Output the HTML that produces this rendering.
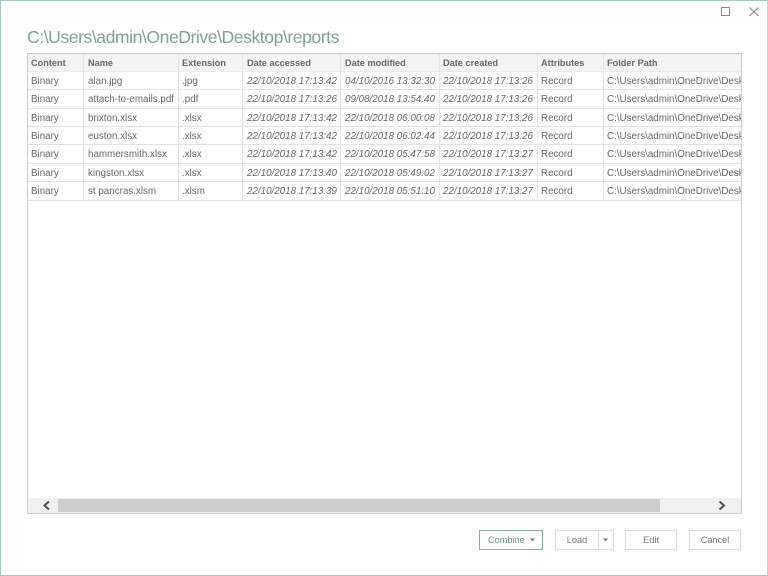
<!DOCTYPE html>
<html><head><meta charset="utf-8">
<style>
html,body{margin:0;padding:0;background:#fff}
#w{position:relative;width:768px;height:576px;overflow:hidden;background:#fff;font-family:"Liberation Sans",sans-serif;color:#666;font-size:9.8px;box-sizing:border-box}
.a{position:absolute}
#t{left:27px;top:26px;font-size:17.6px;letter-spacing:-0.45px;color:#7fa297;white-space:nowrap;line-height:22px;filter:blur(.25px)}
#g{left:27px;top:53px;width:713px;height:459px;border:1px solid #a8e0cc;overflow:hidden;background:#fff}
.r{position:absolute;left:0;width:713px;height:18px;border-bottom:1px solid #e2e2e2;white-space:nowrap;filter:blur(.25px)}
.r span{position:absolute;top:0;white-space:nowrap}
.c1{left:3px}.c2{left:60px}.c3{left:154px}.c4{left:219px;font-style:italic}.c5{left:317px;font-style:italic}.c6{left:415px;font-style:italic}.c7{left:513px}.c8{left:579px}
.hd{font-weight:bold;color:#666;font-size:9.2px;font-style:normal!important}
.v{position:absolute;top:0;width:1px;height:146px;background:#e4e4e4}
.b{position:absolute;top:530px;height:18px;line-height:19px;border:1px solid #dedede;background:#fff;text-align:center;color:#777;font-size:9.2px;filter:blur(.2px)}
</style></head><body>
<div id="w">
<div class="a" style="left:0;top:0;width:768px;height:1px;background:#a9c8be"></div>
<div class="a" style="left:0;top:0;width:1px;height:576px;background:#a9c8be"></div>
<div class="a" style="left:767px;top:0;width:1px;height:576px;background:#c4d9d2"></div>
<div class="a" style="left:0;top:575px;width:768px;height:1px;background:#a9c8be"></div>
<svg class="a" style="left:715px;top:0" width="53" height="24" viewBox="0 0 53 24"><rect x="6.5" y="7.5" width="8" height="8" fill="none" stroke="#888" stroke-width="1"/><path d="M34.5 7.5 L43.5 16 M43.5 7.5 L34.5 16" stroke="#888" stroke-width="1" fill="none"/></svg>
<div id="t" class="a">C:\Users\admin\OneDrive\Desktop\reports</div>
<div id="g" class="a">
<div class="r" style="top:0;height:17px;line-height:19px;background:#f4f4f4;border-bottom-color:#ececec"><span class="c1 hd">Content</span><span class="c2 hd">Name</span><span class="c3 hd">Extension</span><span class="c4 hd">Date accessed</span><span class="c5 hd">Date modified</span><span class="c6 hd">Date created</span><span class="c7 hd">Attributes</span><span class="c8 hd">Folder Path</span></div>
<div class="r" style="top:17px;line-height:22px"><span class="c1">Binary</span><span class="c2">alan.jpg</span><span class="c3">.jpg</span><span class="c4">22/10/2018 17:13:42</span><span class="c5">04/10/2016 13:32:30</span><span class="c6">22/10/2018 17:13:26</span><span class="c7">Record</span><span class="c8">C:\Users\admin\OneDrive\Desk</span></div>
<div class="r" style="top:36px;line-height:20px"><span class="c1">Binary</span><span class="c2">attach-to-emails.pdf</span><span class="c3">.pdf</span><span class="c4">22/10/2018 17:13:26</span><span class="c5">09/08/2018 13:54:40</span><span class="c6">22/10/2018 17:13:26</span><span class="c7">Record</span><span class="c8">C:\Users\admin\OneDrive\Desk</span></div>
<div class="r" style="top:54px;line-height:21px"><span class="c1">Binary</span><span class="c2">brixton.xlsx</span><span class="c3">.xlsx</span><span class="c4">22/10/2018 17:13:42</span><span class="c5">22/10/2018 06:00:08</span><span class="c6">22/10/2018 17:13:26</span><span class="c7">Record</span><span class="c8">C:\Users\admin\OneDrive\Desk</span></div>
<div class="r" style="top:72px;line-height:21px"><span class="c1">Binary</span><span class="c2">euston.xlsx</span><span class="c3">.xlsx</span><span class="c4">22/10/2018 17:13:42</span><span class="c5">22/10/2018 06:02:44</span><span class="c6">22/10/2018 17:13:26</span><span class="c7">Record</span><span class="c8">C:\Users\admin\OneDrive\Desk</span></div>
<div class="r" style="top:91px;line-height:20px"><span class="c1">Binary</span><span class="c2">hammersmith.xlsx</span><span class="c3">.xlsx</span><span class="c4">22/10/2018 17:13:42</span><span class="c5">22/10/2018 05:47:58</span><span class="c6">22/10/2018 17:13:27</span><span class="c7">Record</span><span class="c8">C:\Users\admin\OneDrive\Desk</span></div>
<div class="r" style="top:109px;line-height:21px"><span class="c1">Binary</span><span class="c2">kingston.xlsx</span><span class="c3">.xlsx</span><span class="c4">22/10/2018 17:13:40</span><span class="c5">22/10/2018 05:49:02</span><span class="c6">22/10/2018 17:13:27</span><span class="c7">Record</span><span class="c8">C:\Users\admin\OneDrive\Desk</span></div>
<div class="r" style="top:128px;line-height:20px"><span class="c1">Binary</span><span class="c2">st pancras.xlsm</span><span class="c3">.xlsm</span><span class="c4">22/10/2018 17:13:39</span><span class="c5">22/10/2018 05:51:10</span><span class="c6">22/10/2018 17:13:27</span><span class="c7">Record</span><span class="c8">C:\Users\admin\OneDrive\Desk</span></div>
<div class="v" style="left:55px"></div><div class="v" style="left:150px"></div><div class="v" style="left:214px"></div><div class="v" style="left:312px"></div><div class="v" style="left:411px"></div><div class="v" style="left:509px"></div><div class="v" style="left:575px"></div>
<div class="a" style="left:0;top:444px;width:713px;height:15px;background:#f0f0f0"></div>
<div class="a" style="left:30px;top:445px;width:602px;height:13px;background:#cdcdcd"></div>
<svg class="a" style="left:0;top:444px" width="713" height="15" viewBox="0 0 713 15"><path d="M21 3.5 L16.5 7.5 L21 11.5" fill="none" stroke="#505050" stroke-width="2"/><path d="M691.5 3.5 L696 7.5 L691.5 11.5" fill="none" stroke="#505050" stroke-width="2"/></svg>
</div>
<div class="b" style="left:479px;width:62px;border:1px solid #7fae9e;color:#6b9486;text-align:left"><span style="margin-left:8px">Combine</span></div>
<svg class="a" style="left:529px;top:538px" width="8" height="4"><path d="M1 0.5 H6 L3.5 3.5 Z" fill="#777"/></svg>
<div class="b" style="left:555px;width:42px">Load</div>
<div class="b" style="left:598px;width:14px"></div>
<svg class="a" style="left:602px;top:538px" width="8" height="4"><path d="M1 0.5 H6 L3.5 3.5 Z" fill="#777"/></svg>
<div class="b" style="left:625px;width:50px">Edit</div>
<div class="b" style="left:689px;width:50px">Cancel</div>
</div>
</body></html>
